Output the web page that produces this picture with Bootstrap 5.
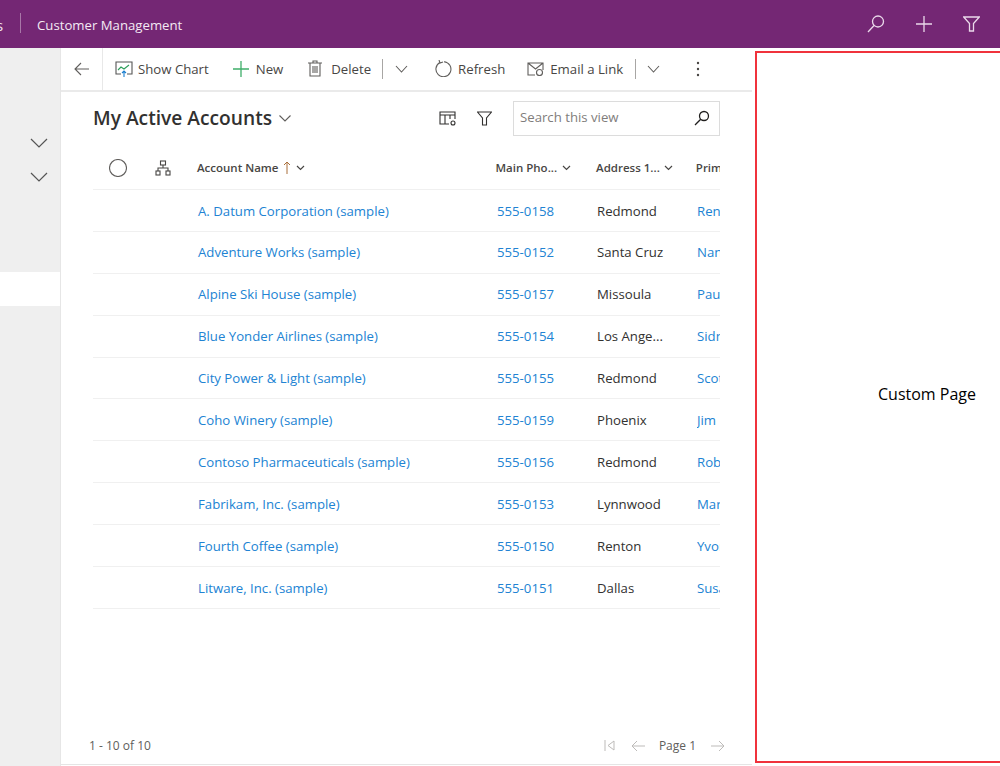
<!DOCTYPE html>
<html lang="en"><head><meta charset="utf-8">
<title>Customer Management</title>
<link href="https://cdn.jsdelivr.net/npm/bootstrap@5.3.0/dist/css/bootstrap.min.css" rel="stylesheet">
<style>
html,body{width:1000px;height:766px;overflow:hidden}
body{font-family:"Open Sans","Noto Sans","Liberation Sans",sans-serif;color:#323130;font-size:13.2px;background:#fff}
.topbar{height:48px;background:#742774;color:#fff}
.app-cut{width:20px;font-size:15px;overflow:hidden;color:#f0e4f0;text-indent:-4px;padding-top:3px}
.top-sep{width:1px;height:20px;background:#a877a8;margin:-2px 16px 0 0}
.app-name{font-size:13.2px;color:#f3e9f3;padding-top:3px}
.top-icons{gap:30px;padding-right:20px}
.shell{height:718px}
.side{width:61px;background:#efefef;padding-top:78px;border-right:1px solid #e6e6e6;flex:none}
.side-chev{height:34px;padding-left:30px}
.side-sel{height:34px;background:#fff;margin-top:78px}
.mainp{width:691px;height:717px;border-bottom:1px solid #e5e5e5;flex:none}
.cmd{height:44px;border-bottom:2px solid #eaeaea;color:#484644;flex:none}
.cmd-back{width:42px;height:42px;border-right:1px solid #e8e8e8;justify-content:center}
.cmd-item{white-space:nowrap}
.cmd-item span{padding-top:2px}
.cmd-sep{width:1px;height:20px;background:#a8a6a4}
.view-head{height:60px;padding:0 32px 8px 32px;flex:none}
.view-head>*{flex:none}
.view-title{font-size:19.200px;font-weight:600;color:#323130;margin:0;white-space:nowrap}
.search-box{width:207px;height:35px;border:1px solid #dcdcdc;padding:0 9px 0 6px;color:#7f7d7b}
.gridwrap{width:627px;margin-left:32px;overflow:hidden;flex:none}
.ghead{height:38px;padding-bottom:6px;font-size:11.500px;font-weight:600;color:#484644;border-bottom:1px solid #f0f0f0;white-space:nowrap}
.ghead>*{flex:none}
.grow{height:41.900px;padding-top:2px;border-bottom:1px solid #f0f0f0;white-space:nowrap}
.c-name{width:404px;padding-left:105px;flex:none}
.c-phone{width:100px;flex:none}
.c-addr{width:100px;flex:none}
.c-prim{flex:none;width:23px;overflow:hidden}
.acc{color:#2183d3;text-decoration:none}
.foot{height:38px;padding:0 27px 0 28px;font-size:12px;color:#605e5c;margin-top:118px;flex:none}
.gapcol{width:3px;flex:none}
.custom{width:245px;height:712px;margin-top:3px;border:2px solid #f0323c;border-right:0;font-size:16px;color:#000;padding:0 0 26px 121px;flex:none}
</style></head><body>
<header class="topbar d-flex align-items-center">
<div class="app-cut">s</div>
<div class="top-sep"></div>
<div class="app-name flex-grow-1">Customer Management</div>
<div class="top-icons d-flex align-items-center">
<svg width="18" height="18" viewBox="0 0 18 18" fill="none" stroke="#ead9ea" stroke-width="1.3"><circle cx="11" cy="6.500" r="5.500"/><path d="M7 10.500 1 17"/></svg>
<svg width="18" height="18" viewBox="0 0 18 18" stroke="#ead9ea" stroke-width="1.3"><path d="M1 9h16M9 1v16"/></svg>
<svg width="17" height="16" viewBox="0 0 17 16" fill="none" stroke="#ead9ea" stroke-width="1.3"><path d="M.7 1h15.600l-5.800 6.500V15h-4V7.500z"/></svg>
</div>
</header>
<div class="shell d-flex">
<aside class="side">
<div class="side-chev d-flex align-items-center"><svg width="18" height="10" viewBox="0 0 18 10" fill="none" stroke="#555" stroke-width="1.2"><path d="M1 1l8 8 8-8"/></svg></div>
<div class="side-chev d-flex align-items-center"><svg width="18" height="10" viewBox="0 0 18 10" fill="none" stroke="#555" stroke-width="1.2"><path d="M1 1l8 8 8-8"/></svg></div>
<div class="side-sel"></div>
</aside>
<main class="mainp d-flex flex-column">
<div class="cmd d-flex align-items-center">
<div class="cmd-back d-flex align-items-center"><svg width="16" height="14" viewBox="0 0 16 14" fill="none" stroke="#605e5c" stroke-width="1.1"><path d="M15 7H1M7 1 1 7l6 6"/></svg></div>
<div class="cmd-item d-flex align-items-center" style="margin-left:12px"><svg width="18" height="16" viewBox="0 0 18 16" fill="none" stroke="#555" stroke-width="1.1"><path d="M6 13H1V1h16v12h-5"/><path d="M3 9l3-3 3 2 5-4" stroke="#2e9e5b"/><path d="M9 16V10M7 12l2-2 2 2" stroke="#1a7fd0"/></svg><span style="margin-left:5px">Show Chart</span></div>
<div class="cmd-item d-flex align-items-center" style="margin-left:24px"><svg width="16" height="16" viewBox="0 0 16 16" stroke="#3fae6a" stroke-width="1.3"><path d="M0 8h16M8 0v16"/></svg><span style="margin-left:7px">New</span></div>
<div class="cmd-item d-flex align-items-center" style="margin-left:25px"><svg width="14" height="17" viewBox="0 0 14 17" fill="none" stroke="#605e5c" stroke-width="1.1"><path d="M0 3h14M2 3v13h10V3M5 3V1h4v2M5 6v7M7 6v7M9 6v7"/></svg><span style="margin-left:9px">Delete</span></div>
<div class="cmd-sep" style="margin-left:11px"></div>
<svg style="margin-left:12px" width="13" height="8" viewBox="0 0 13 8" fill="none" stroke="#605e5c" stroke-width="1.1"><path d="M1 1l5.500 6L12 1"/></svg>
<div class="cmd-item d-flex align-items-center" style="margin-left:27px"><svg width="17" height="17" viewBox="0 0 17 17" fill="none" stroke="#605e5c" stroke-width="1.1"><path d="M5 2.500a7.500 7.500 0 1 0 4-.8M4 0l1 3 3-1"/></svg><span style="margin-left:6px">Refresh</span></div>
<div class="cmd-item d-flex align-items-center" style="margin-left:22px"><svg width="17" height="14" viewBox="0 0 17 14" fill="none" stroke="#605e5c" stroke-width="1.1"><path d="M8 13H1V1h15v7M1 1l7.500 6L16 1"/><circle cx="12.500" cy="10.500" r="3"/></svg><span style="margin-left:6px">Email a Link</span></div>
<div class="cmd-sep" style="margin-left:12px"></div>
<svg style="margin-left:11px" width="13" height="8" viewBox="0 0 13 8" fill="none" stroke="#605e5c" stroke-width="1.1"><path d="M1 1l5.500 6L12 1"/></svg>
<svg style="margin-left:36px" width="4" height="16" viewBox="0 0 4 16" fill="#484644"><circle cx="2" cy="2" r="1.200"/><circle cx="2" cy="8" r="1.200"/><circle cx="2" cy="14" r="1.200"/></svg>
</div>
<div class="view-head d-flex align-items-center">
<h1 class="view-title">My Active Accounts</h1>
<svg style="margin-left:7px" width="12" height="7" viewBox="0 0 12 7" fill="none" stroke="#605e5c" stroke-width="1.1"><path d="M.5.500 6 6 11.500.5"/></svg>
<svg style="margin-left:148px" width="17" height="15" viewBox="0 0 17 15" fill="none" stroke="#323130" stroke-width="1.1"><path d="M10 13H1V1h15v7M1 4h15M6 4v9M11 4v4"/><circle cx="14" cy="12" r="2"/></svg>
<svg style="margin-left:21px" width="15" height="15" viewBox="0 0 15 15" fill="none" stroke="#323130" stroke-width="1.1"><path d="M.5 1h14l-5 6v7h-4V7z"/></svg>
<div class="search-box d-flex align-items-center justify-content-between ms-auto"><span>Search this view</span><svg width="16" height="16" viewBox="0 0 16 16" fill="none" stroke="#201f1e" stroke-width="1.3"><circle cx="10" cy="6" r="4.500"/><path d="M6.700 9.300 1 15"/></svg></div>
</div>
<div class="gridwrap">
<div class="ghead d-flex align-items-center">
<svg style="margin-left:16px" width="18" height="18" viewBox="0 0 18 18" fill="none" stroke="#605e5c" stroke-width="1.1"><circle cx="9" cy="9" r="8.500"/></svg>
<svg style="margin-left:28px" width="16" height="16" viewBox="0 0 16 16" fill="none" stroke="#484644" stroke-width="1.1"><rect x="5.500" y="1" width="5" height="4"/><rect x="1" y="11" width="4" height="4"/><rect x="11" y="11" width="4" height="4"/><path d="M8 5v3M3 11V8h10v3"/></svg>
<span style="margin-left:26px">Account Name</span>
<svg style="margin-left:5px" width="8" height="13" viewBox="0 0 8 13" fill="none" stroke="#a96f3b"><path d="M4 13V1M1 4l3-3 3 3"/></svg>
<svg style="margin-left:5px" width="9" height="6" viewBox="0 0 9 6" fill="none" stroke="#484644" stroke-width="1.200"><path d="M1 1l3.500 3.500L8 1"/></svg>
<span style="margin-left:190px">Main Pho...</span>
<svg style="margin-left:5px" width="9" height="6" viewBox="0 0 9 6" fill="none" stroke="#484644" stroke-width="1.200"><path d="M1 1l3.500 3.500L8 1"/></svg>
<span style="margin-left:25px">Address 1...</span>
<svg style="margin-left:4px" width="9" height="6" viewBox="0 0 9 6" fill="none" stroke="#484644" stroke-width="1.200"><path d="M1 1l3.500 3.500L8 1"/></svg>
<span style="margin-left:23px">Prim</span>
</div>
<div class="grow d-flex align-items-center"><div class="c-name"><a class="acc" href="#">A. Datum Corporation (sample)</a></div><div class="c-phone"><a class="acc" href="#">555-0158</a></div><div class="c-addr">Redmond</div><div class="c-prim"><a class="acc" href="#">Rene</a></div></div>
<div class="grow d-flex align-items-center"><div class="c-name"><a class="acc" href="#">Adventure Works (sample)</a></div><div class="c-phone"><a class="acc" href="#">555-0152</a></div><div class="c-addr">Santa Cruz</div><div class="c-prim"><a class="acc" href="#">Nancy</a></div></div>
<div class="grow d-flex align-items-center"><div class="c-name"><a class="acc" href="#">Alpine Ski House (sample)</a></div><div class="c-phone"><a class="acc" href="#">555-0157</a></div><div class="c-addr">Missoula</div><div class="c-prim"><a class="acc" href="#">Paul</a></div></div>
<div class="grow d-flex align-items-center"><div class="c-name"><a class="acc" href="#">Blue Yonder Airlines (sample)</a></div><div class="c-phone"><a class="acc" href="#">555-0154</a></div><div class="c-addr">Los Ange...</div><div class="c-prim"><a class="acc" href="#">Sidney</a></div></div>
<div class="grow d-flex align-items-center"><div class="c-name"><a class="acc" href="#">City Power &amp; Light (sample)</a></div><div class="c-phone"><a class="acc" href="#">555-0155</a></div><div class="c-addr">Redmond</div><div class="c-prim"><a class="acc" href="#">Scott</a></div></div>
<div class="grow d-flex align-items-center"><div class="c-name"><a class="acc" href="#">Coho Winery (sample)</a></div><div class="c-phone"><a class="acc" href="#">555-0159</a></div><div class="c-addr">Phoenix</div><div class="c-prim"><a class="acc" href="#">Jim</a></div></div>
<div class="grow d-flex align-items-center"><div class="c-name"><a class="acc" href="#">Contoso Pharmaceuticals (sample)</a></div><div class="c-phone"><a class="acc" href="#">555-0156</a></div><div class="c-addr">Redmond</div><div class="c-prim"><a class="acc" href="#">Robert</a></div></div>
<div class="grow d-flex align-items-center"><div class="c-name"><a class="acc" href="#">Fabrikam, Inc. (sample)</a></div><div class="c-phone"><a class="acc" href="#">555-0153</a></div><div class="c-addr">Lynnwood</div><div class="c-prim"><a class="acc" href="#">Maria</a></div></div>
<div class="grow d-flex align-items-center"><div class="c-name"><a class="acc" href="#">Fourth Coffee (sample)</a></div><div class="c-phone"><a class="acc" href="#">555-0150</a></div><div class="c-addr">Renton</div><div class="c-prim"><a class="acc" href="#">Yvonne</a></div></div>
<div class="grow d-flex align-items-center"><div class="c-name"><a class="acc" href="#">Litware, Inc. (sample)</a></div><div class="c-phone"><a class="acc" href="#">555-0151</a></div><div class="c-addr">Dallas</div><div class="c-prim"><a class="acc" href="#">Susan</a></div></div>
</div>
<div class="foot d-flex align-items-center justify-content-between">
<span>1 - 10 of 10</span>
<div class="d-flex align-items-center">
<svg width="11" height="11" viewBox="0 0 11 11" fill="none" stroke="#bdbbb9"><path d="M1 0v11M10 1 4 5.500 10 10z"/></svg>
<svg style="margin-left:16px" width="14" height="12" viewBox="0 0 14 12" fill="none" stroke="#bdbbb9"><path d="M14 6H1M6 1 1 6l5 5"/></svg>
<span style="margin-left:14px">Page 1</span>
<svg style="margin-left:15px" width="14" height="12" viewBox="0 0 14 12" fill="none" stroke="#bdbbb9"><path d="M0 6h13M8 1l5 5-5 5"/></svg>
</div>
</div>
</main>
<div class="gapcol"></div>
<section class="custom d-flex align-items-center">Custom Page</section>
</div>
</body></html>
